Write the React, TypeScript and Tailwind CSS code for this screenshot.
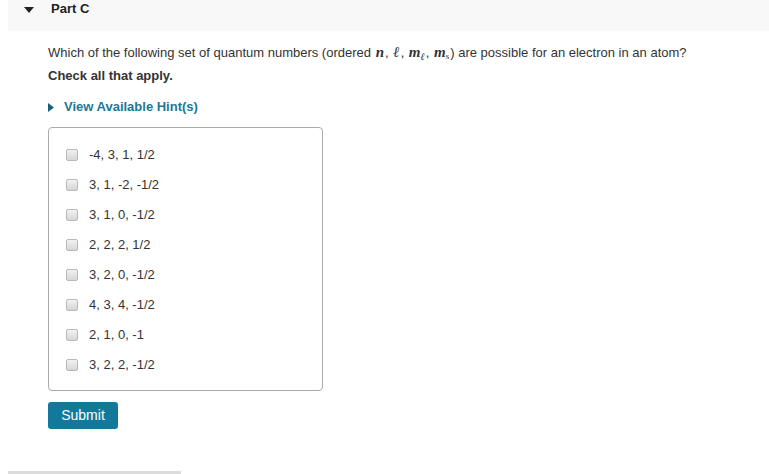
import {JSX} from "react";

const options = [
    "-4, 3, 1, 1/2",
    "3, 1, -2, -1/2",
    "3, 1, 0, -1/2",
    "2, 2, 2, 1/2",
    "3, 2, 0, -1/2",
    "4, 3, 4, -1/2",
    "2, 1, 0, -1",
    "3, 2, 2, -1/2",
];

function Check(): JSX.Element {
    return (
        <span className="w-[12px] h-[12px] rounded-[2px] border border-[#b8b8b8] bg-gradient-to-b from-[#f2f2f2] to-[#d6d6d6] shrink-0"/>
    );
}

export default function App(): JSX.Element {
    const math = "font-['Liberation_Serif',serif] italic font-bold text-[15px] mx-[1px]";

    return (
        <div className="w-[769px] h-[474px] bg-white font-['Liberation_Sans',Arial,sans-serif] text-[13px] text-[#333] overflow-hidden">
            <div className="ml-2 h-[31px] bg-[#f8f8f8] flex items-start">
                <svg width="10" height="6" viewBox="0 0 10 6" className="ml-[16px] mt-[7px]">
                    <polygon points="0,0 10,0 5,6" fill="#222"/>
                </svg>
                <span className="ml-[17px] leading-[18px] font-bold text-[#222]">Part C</span>
            </div>

            <div className="pl-[48px]">
                <p className="mt-[12px] h-[18px] leading-[18px] whitespace-nowrap">
                    Which of the following set of quantum numbers (ordered <span className={math}>n</span>, <span className={math}>ℓ</span>, <span className={math}>m<sub className="text-[10px]">ℓ</sub></span>, <span className={math}>m<sub className="text-[9px] not-italic font-normal">s</sub></span>) are possible for an electron in an atom?
                </p>
                <p className="mt-[6px] leading-[18px] font-bold">Check all that apply.</p>

                <div className="mt-[13px] flex items-center leading-[18px] font-bold text-[#1c7896]">
                    <svg width="6" height="9" viewBox="0 0 6 9" className="mr-[10px]">
                        <polygon points="0,0 6,4.5 0,9" fill="#1a5f78"/>
                    </svg>
                    View Available Hint(s)
                </div>

                <div className="mt-[11px] w-[275px] h-[264px] border border-[#aaa] rounded-[4px] pt-[12px] pl-[17px]">
                    {options.map((o) => (
                        <label key={o} className="h-[30px] flex items-center gap-[11px]">
                            <Check/>
                            <span className="leading-[18px]">{o}</span>
                        </label>
                    ))}
                </div>

                <button className="mt-[11px] w-[70px] h-[27px] bg-[#13789a] text-white text-[14px] rounded-[3px]">
                    Submit
                </button>
            </div>

            <div className="ml-2 mt-[42px] w-[173px] h-[3px] bg-[#dcdcdc]"/>
        </div>
    );
}
